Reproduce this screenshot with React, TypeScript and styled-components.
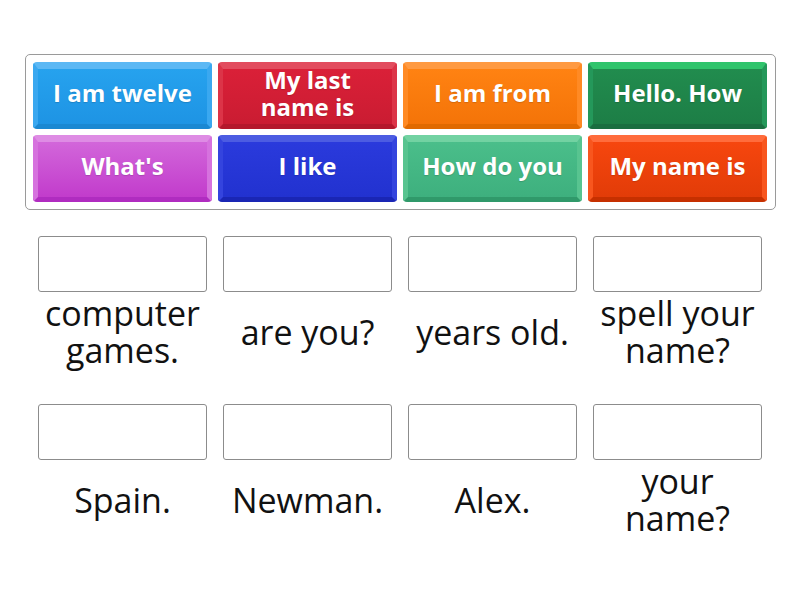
import React from 'react';
import styled, { createGlobalStyle } from 'styled-components';

const GlobalStyle = createGlobalStyle`
  html, body {
    margin: 0;
    padding: 0;
    background: #ffffff;
    font-family: "Open Sans", "Noto Sans", sans-serif;
  }
`;

interface Tone {
  top: string;
  side: string;
  bottom: string;
  from: string;
  to: string;
}

const tones: Record<string, Tone> = {
  blue: { top: '#5cb8f4', side: '#3aa8f0', bottom: '#1a88d2', from: '#26a2ee', to: '#1e94e4' },
  red: { top: '#e24c5e', side: '#dc3448', bottom: '#b4182c', from: '#da2038', to: '#ca1c32' },
  orange: { top: '#ff9a42', side: '#ff8a24', bottom: '#e06a00', from: '#ff8212', to: '#f47408' },
  green: { top: '#30c46c', side: '#24985a', bottom: '#1a6e40', from: '#218c4e', to: '#1d7e46' },
  purple: { top: '#de8ce4', side: '#d672de', bottom: '#b02cc0', from: '#d266da', to: '#c23ccc' },
  navy: { top: '#4c5ce2', side: '#3444de', bottom: '#1a26b4', from: '#2a3adc', to: '#2232d0' },
  teal: { top: '#72d2a2', side: '#58c490', bottom: '#30996a', from: '#4abe8a', to: '#3eb07e' },
  flame: { top: '#ff6c3c', side: '#f8561e', bottom: '#c63000', from: '#f6460e', to: '#e23c08' },
};

const tiles: { label: string; tone: keyof typeof tones }[] = [
  { label: 'I am twelve', tone: 'blue' },
  { label: 'My last name is', tone: 'red' },
  { label: 'I am from', tone: 'orange' },
  { label: 'Hello. How', tone: 'green' },
  { label: "What's", tone: 'purple' },
  { label: 'I like', tone: 'navy' },
  { label: 'How do you', tone: 'teal' },
  { label: 'My name is', tone: 'flame' },
];

const slots = [
  ['computer games.', 'are you?', 'years old.', 'spell your name?'],
  ['Spain.', 'Newman.', 'Alex.', 'your name?'],
];

const Page = styled.div`
  padding: 54px 24px 0 25px;
  display: flex;
  flex-direction: column;
`;

const TileBoard = styled.div`
  width: 751px;
  box-sizing: border-box;
  border: 1px solid #9a9a9a;
  border-radius: 5px;
  padding: 7px;
  display: grid;
  grid-template-columns: repeat(4, 179px);
  grid-auto-rows: 67px;
  gap: 6px;
`;

const Tile = styled.div<{ $tone: Tone }>`
  box-sizing: border-box;
  border-style: solid;
  border-width: 7px 5px 5px 5px;
  border-color: ${(p) => `${p.$tone.top} ${p.$tone.side} ${p.$tone.bottom} ${p.$tone.side}`};
  border-radius: 4px;
  background: linear-gradient(${(p) => p.$tone.from}, ${(p) => p.$tone.to});
  display: flex;
  align-items: center;
  justify-content: center;
  text-align: center;
  color: #ffffff;
  font-weight: 700;
  font-size: 24px;
  line-height: 27px;
  padding: 0 6px 8px;
  text-shadow: 0 1px 1px rgba(0, 0, 0, 0.15);
`;

const TileText = styled.span`
  display: block;
  max-width: 110px;
`;

const WideTileText = styled.span`
  display: block;
  white-space: nowrap;
`;

const SlotGrid = styled.div`
  margin-top: 26px;
  padding-left: 13px;
  display: grid;
  grid-template-columns: repeat(4, 169px);
  column-gap: 16px;
  row-gap: 32px;
`;

const Slot = styled.div`
  display: flex;
  flex-direction: column;
`;

const DropBox = styled.div`
  height: 56px;
  box-sizing: border-box;
  border: 1px solid #8c8c8c;
  border-radius: 3px;
  background: #ffffff;
`;

const Phrase = styled.div`
  height: 80px;
  display: flex;
  align-items: center;
  justify-content: center;
  text-align: center;
  font-size: 34px;
  line-height: 37px;
  color: #111111;
  margin: 0 -6px;
`;

const App: React.FC = () => {
  return (
    <>
      <GlobalStyle />
      <Page>
        <TileBoard>
          {tiles.map((t) => (
            <Tile key={t.label} $tone={tones[t.tone]}>
              {t.label === 'My last name is' ? (
                <TileText>{t.label}</TileText>
              ) : (
                <WideTileText>{t.label}</WideTileText>
              )}
            </Tile>
          ))}
        </TileBoard>
        <SlotGrid>
          {slots.flat().map((s) => (
            <Slot key={s}>
              <DropBox />
              <Phrase>{s === 'computer games.' || s === 'spell your name?' || s === 'your name?' ? <WrapText>{s}</WrapText> : s}</Phrase>
            </Slot>
          ))}
        </SlotGrid>
      </Page>
    </>
  );
};

const WrapText = styled.span`
  display: block;
  max-width: 160px;
`;

export default App;
